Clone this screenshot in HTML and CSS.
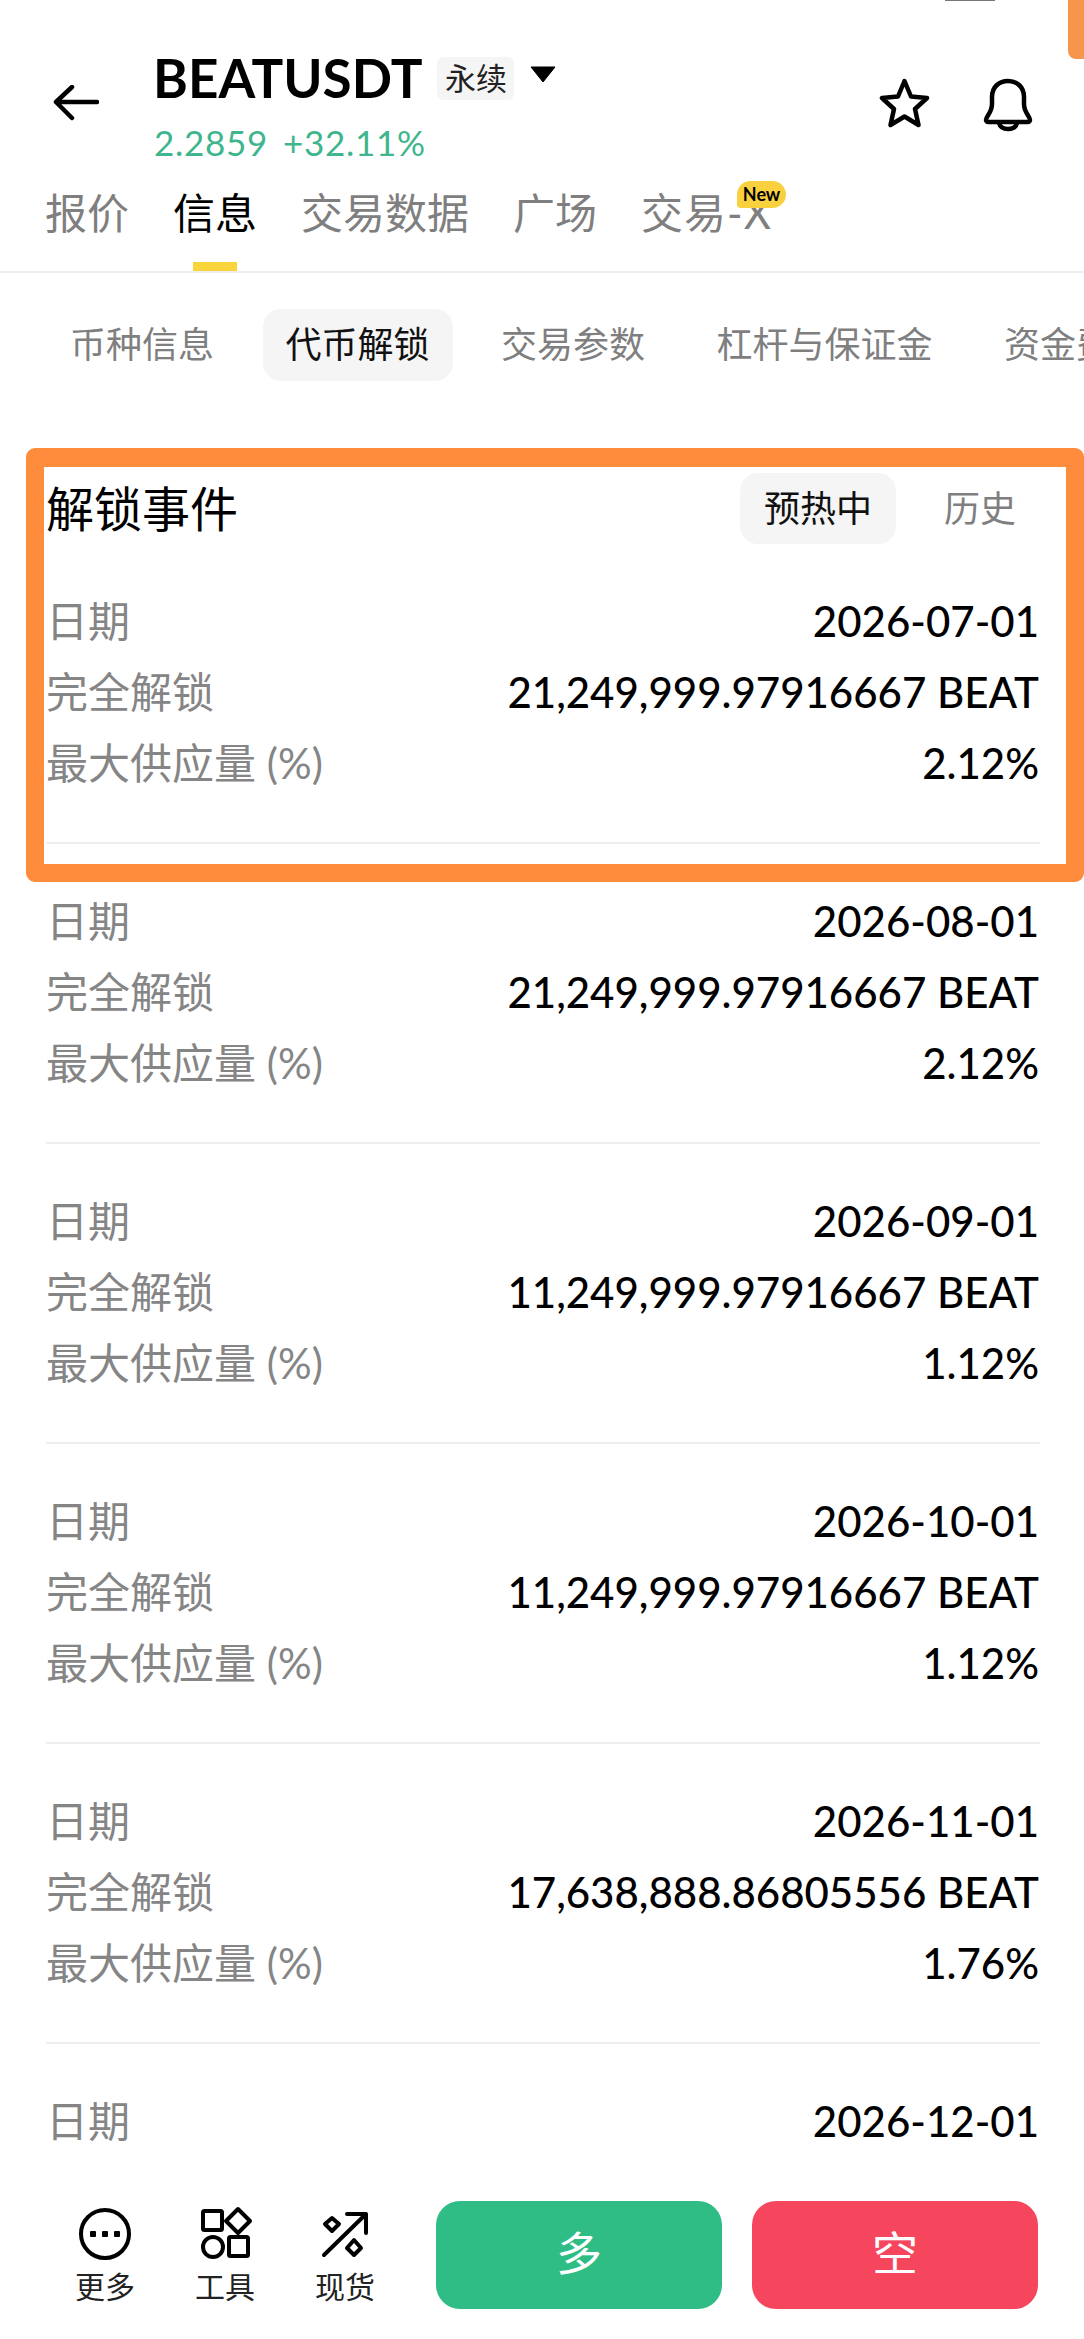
FILE: index.html
```html
<!DOCTYPE html>
<html>
  <head>
    <title>BEATUSDT</title>
    <link rel="stylesheet" href="styles.css">
  </head>
  <body>
    <div class="status-mark"></div>

    <header class="head">
      <svg class="back-icon" width="46" height="36" viewBox="0 0 46 36">
        <path d="M44 17H3M19 2L3 17L19 33" fill="none" stroke="#000" stroke-width="4.5" stroke-linecap="round" stroke-linejoin="round"/>
      </svg>
      <div class="symbol">
        <div class="symbol-row">
          <span class="symbol-name">BEATUSDT</span>
          <span class="symbol-tag">永续</span>
          <svg class="symbol-caret" width="26" height="17" viewBox="0 0 26 17"><path d="M1 1H25L13 16Z" fill="#000" stroke="#000" stroke-linejoin="round"/></svg>
        </div>
        <div class="price-row"><span>2.2859</span><span>+32.11%</span></div>
      </div>
      <div class="head-actions">
        <svg width="51" height="50" viewBox="0 0 51 50">
          <path d="M25.5 3L32 18.5L48 20L36 31L39.500 47L25.500 38.500L11.500 47L15 31L3 20L19 18.500Z" fill="none" stroke="#000" stroke-width="4.5" stroke-linejoin="round"/>
        </svg>
        <svg width="52" height="54" viewBox="0 0 52 54">
          <path d="M4 42C4 38 10 35 10 26V19C10 9 17 3 26 3C35 3 42 9 42 19V26C42 35 48 38 48 42C48 43 47 44 46 44H6C5 44 4 43 4 42Z" fill="none" stroke="#000" stroke-width="4.5" stroke-linejoin="round"/>
          <path d="M17 45C18 49 21 51 26 51C31 51 34 49 35 45" fill="none" stroke="#000" stroke-width="4.5"/>
        </svg>
      </div>
    </header>

    <nav class="tabs">
      <div class="tab">报价</div>
      <div class="tab tab-active">信息<i class="tab-bar"></i></div>
      <div class="tab">交易数据</div>
      <div class="tab">广场</div>
      <div class="tab tab-new">交易-X<span class="new-badge">New</span></div>
    </nav>

    <div class="subtabs">
      <div class="subtab">币种信息</div>
      <div class="subtab subtab-active">代币解锁</div>
      <div class="subtab">交易参数</div>
      <div class="subtab">杠杆与保证金</div>
      <div class="subtab">资金费率</div>
    </div>

    <main class="events">
      <div class="events-head">
        <h2>解锁事件</h2>
        <div class="toggle">
          <span class="toggle-item toggle-active">预热中</span>
          <span class="toggle-item">历史</span>
        </div>
      </div>

      <section class="event">
        <div class="row"><span>日期</span><b>2026-07-01</b></div>
        <div class="row"><span>完全解锁</span><b>21,249,999.97916667 BEAT</b></div>
        <div class="row"><span>最大供应量 (%)</span><b>2.12%</b></div>
      </section>
      <section class="event">
        <div class="row"><span>日期</span><b>2026-08-01</b></div>
        <div class="row"><span>完全解锁</span><b>21,249,999.97916667 BEAT</b></div>
        <div class="row"><span>最大供应量 (%)</span><b>2.12%</b></div>
      </section>
      <section class="event">
        <div class="row"><span>日期</span><b>2026-09-01</b></div>
        <div class="row"><span>完全解锁</span><b>11,249,999.97916667 BEAT</b></div>
        <div class="row"><span>最大供应量 (%)</span><b>1.12%</b></div>
      </section>
      <section class="event">
        <div class="row"><span>日期</span><b>2026-10-01</b></div>
        <div class="row"><span>完全解锁</span><b>11,249,999.97916667 BEAT</b></div>
        <div class="row"><span>最大供应量 (%)</span><b>1.12%</b></div>
      </section>
      <section class="event">
        <div class="row"><span>日期</span><b>2026-11-01</b></div>
        <div class="row"><span>完全解锁</span><b>17,638,888.86805556 BEAT</b></div>
        <div class="row"><span>最大供应量 (%)</span><b>1.76%</b></div>
      </section>
      <section class="event">
        <div class="row"><span>日期</span><b>2026-12-01</b></div>
      </section>
    </main>

    <!-- orange marker drawn on top of the screenshot -->
    <div class="marker-box"></div>
    <div class="marker-tab"></div>

    <footer class="bottom">
      <div class="tool">
        <svg width="56" height="56" viewBox="0 0 56 56">
          <circle cx="28" cy="28" r="24" fill="none" stroke="#000" stroke-width="4"/>
          <rect x="13" y="25" width="6" height="6" rx="1"/>
          <rect x="25" y="25" width="6" height="6" rx="1"/>
          <rect x="37" y="25" width="6" height="6" rx="1"/>
        </svg>
        <span>更多</span>
      </div>
      <div class="tool">
        <svg width="56" height="56" viewBox="0 0 56 56" fill="none" stroke="#000" stroke-width="4" stroke-linejoin="round">
          <rect x="6" y="5" width="19" height="19" rx="1.500"/>
          <path d="M41 3L53 15L41 27L29 15Z"/>
          <circle cx="16" cy="41" r="10"/>
          <rect x="32" y="31" width="19" height="19" rx="1.500"/>
        </svg>
        <span>工具</span>
      </div>
      <div class="tool">
        <svg width="56" height="56" viewBox="0 0 56 56" fill="none" stroke="#000" stroke-width="4" stroke-linecap="round" stroke-linejoin="round">
          <path d="M7 49L49 8M30 8H49V27"/>
          <path d="M15 12L22 18L15 25L8 18Z" stroke-linecap="butt"/>
          <path d="M37 34L44 42L37 49L30 42Z" stroke-linecap="butt"/>
        </svg>
        <span>现货</span>
      </div>
      <div class="trade-buttons">
        <div class="trade trade-long">多</div>
        <div class="trade trade-short">空</div>
      </div>
    </footer>
  </body>
</html>
```

FILE: styles.css
```css
html, body {
  margin: 0;
  padding: 0;
  height: 2339px;
  overflow: hidden;
  background-color: #fff;
}

body {
  position: relative;
  font-family: Lato, "Noto Sans CJK SC", sans-serif;
  color: #000;
}

.status-mark {
  position: absolute;
  top: 0;
  left: 945px;
  width: 50px;
  height: 1px;
  background-color: #777;
}

/* Header */
.head {
  display: flex;
  height: 118px;
  padding: 50px 50px 0 53px;
}

.back-icon {
  margin-top: 35px;
}

.symbol {
  margin-left: 54px;
}

.symbol-row {
  display: flex;
  align-items: center;
  height: 56px;
}

.symbol-name {
  font-size: 53px;
  font-weight: 700;
  line-height: 56px;
}

.symbol-tag {
  margin-left: 15px;
  width: 77px;
  height: 43px;
  line-height: 43px;
  text-align: center;
  font-size: 31px;
  color: #222;
  background-color: #f5f5f5;
  border-radius: 6px;
}

.symbol-caret {
  margin: -7px 0 0 16px;
}

.price-row {
  display: flex;
  gap: 15px;
  margin-top: 11px;
  margin-left: 1px;
  font-size: 35px;
  line-height: 50px;
  color: #3fb58e;
  letter-spacing: 0.7px;
}

.head-actions {
  display: flex;
  gap: 52px;
  margin-left: auto;
  padding-top: 28px;
}

/* Main tabs */
.tabs {
  display: flex;
  gap: 44px;
  height: 103px;
  padding-left: 45px;
  border-bottom: 2px solid #eee;
}

.tab {
  display: flex;
  flex-direction: column;
  align-items: center;
  padding-top: 20px;
  font-size: 42px;
  line-height: 50px;
  color: #7f7f7f;
  white-space: nowrap;
}

.tab-active {
  color: #000;
}

.tab-bar {
  display: block;
  width: 44px;
  height: 9px;
  margin-top: 24px;
  background-color: #f9d43a;
}

.tab-new {
  position: relative;
  letter-spacing: 1px;
}

.new-badge {
  position: absolute;
  top: 13px;
  left: 96px;
  width: 49px;
  height: 27px;
  line-height: 27px;
  text-align: center;
  font-size: 18px;
  font-weight: 700;
  letter-spacing: 0;
  color: #000;
  background-color: #f9d13e;
  border-radius: 14px 14px 14px 4px;
}

/* Sub tabs */
.subtabs {
  display: flex;
  gap: 25.5px;
  height: 72px;
  margin-top: 36px;
  padding-left: 47px;
  overflow: hidden;
}

.subtab {
  flex: none;
  padding: 0 23px;
  font-size: 36px;
  line-height: 70px;
  color: #7f7f7f;
  white-space: nowrap;
}

.subtab-active {
  color: #111;
  background-color: #f5f5f5;
  border-radius: 18px;
}

/* Unlock events */
.events {
  margin: 92px 44px 0 46px;
}

.events-head {
  display: flex;
  align-items: center;
  justify-content: space-between;
  height: 71px;
}

.events-head h2 {
  margin: 0;
  font-size: 48px;
  font-weight: 400;
  line-height: 71px;
}

.toggle {
  display: flex;
  gap: 24px;
}

.toggle-item {
  padding: 0 24px;
  font-size: 36px;
  line-height: 71px;
  color: #7f7f7f;
}

.toggle-active {
  color: #111;
  background-color: #f5f5f5;
  border-radius: 18px;
}

.event {
  padding: 42px 0 43px;
  border-bottom: 2px solid #eee;
}

.row {
  display: flex;
  align-items: center;
  justify-content: space-between;
  height: 71px;
}

.row span {
  margin-top: -6px;
  font-size: 42px;
  color: #858585;
}

.row b {
  margin: -1px 1px 0 0;
  font-size: 42px;
  font-weight: 500;
}

/* Annotation */
.marker-box {
  position: absolute;
  top: 448px;
  left: 26px;
  width: 1022px;
  height: 397px;
  border: 18px solid #fe8c3c;
  border-top-width: 19px;
  border-radius: 9px;
}

.marker-tab {
  position: absolute;
  top: 0;
  right: 0;
  width: 16px;
  height: 59px;
  background-color: #f5964c;
  border-radius: 0 0 0 8px;
}

/* Bottom bar */
.bottom {
  position: absolute;
  left: 0;
  right: 0;
  bottom: 0;
  height: 149px;
  display: flex;
  padding-left: 45px;
  background-color: #fff;
}

.tool {
  display: flex;
  flex-direction: column;
  align-items: center;
  width: 120px;
  padding-top: 16px;
}

.tool span {
  margin-top: 4px;
  font-size: 30px;
  line-height: 40px;
  color: #222;
}

.trade-buttons {
  display: flex;
  gap: 30px;
  margin-left: 31px;
  padding-top: 11px;
}

.trade {
  width: 286px;
  height: 108px;
  line-height: 104px;
  text-align: center;
  font-size: 46px;
  color: #fff;
  border-radius: 24px;
}

.trade-long {
  background-color: #2fbd85;
}

.trade-short {
  background-color: #f6465d;
}
```
